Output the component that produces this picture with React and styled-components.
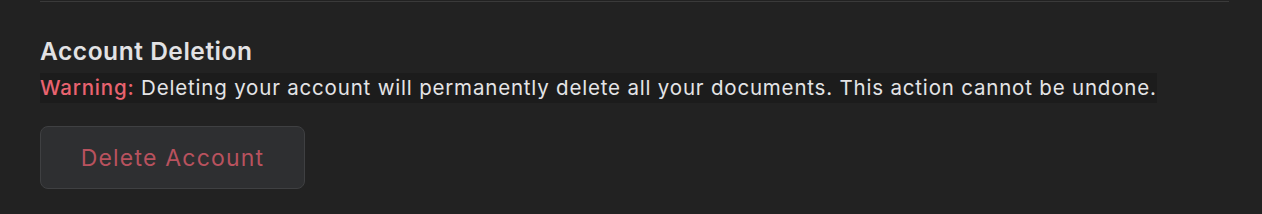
import React from "react";
import styled, { createGlobalStyle } from "styled-components";

const Global = createGlobalStyle`
  html, body { margin: 0; padding: 0; background: #222222; }
  body { font-family: Inter, "Noto Sans", sans-serif; -webkit-font-smoothing: antialiased; }
`;

const Page = styled.div`
  width: 1262px;
  height: 214px;
  background: #222222;
  padding: 0 33px 0 40px;
  box-sizing: border-box;
`;

const Divider = styled.hr`
  margin: 1px 0 0;
  border: none;
  border-top: 1px solid #3a3a3a;
`;

const Section = styled.section`
  display: flex;
  flex-direction: column;
  align-items: flex-start;
  padding-top: 33px;
`;

const Title = styled.h2`
  margin: 0;
  font-size: 24.5px;
  font-weight: 600;
  letter-spacing: 0.55px;
  color: #e2e2e4;
  line-height: 32px;
`;

const WarningText = styled.p`
  margin: 6px 0 0;
  font-size: 20.5px;
  letter-spacing: 0.81px;
  line-height: 30px;
  color: #e4e4e6;
  background: #1c1c1c;
`;

const WarningLabel = styled.span`
  color: #e9636f;
  font-weight: 500;
`;

const DangerButton = styled.button`
  margin-top: 23px;
  width: 265px;
  height: 63px;
  border-radius: 8px;
  border: 1.5px solid #3f4042;
  background: #2e2f31;
  color: #b8525e;
  font-family: inherit;
  font-size: 23px;
  letter-spacing: 1.2px;
  font-weight: 400;
  padding: 0;
  cursor: pointer;
`;

export default function App() {
  return (
    <>
      <Global />
      <Page>
        <Divider />
        <Section>
          <Title>Account Deletion</Title>
          <WarningText>
            <WarningLabel>Warning:</WarningLabel> Deleting your account will permanently delete all your documents. This action cannot be undone.
          </WarningText>
          <DangerButton>Delete Account</DangerButton>
        </Section>
      </Page>
    </>
  );
}
